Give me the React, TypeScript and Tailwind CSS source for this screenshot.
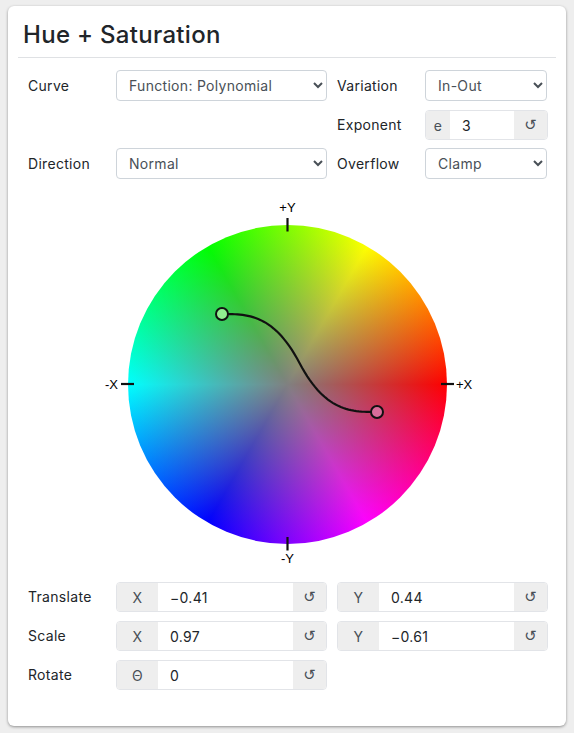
const curve = Array.from({ length: 61 }, (_, i) => {
  const t = i / 60;
  const f = t < 0.5 ? 4 * t * t * t : 1 - 4 * (1 - t) * (1 - t) * (1 - t);
  return `${i === 0 ? "M" : "L"}${(94 + 155 * t).toFixed(2)} ${(120 + 98 * f).toFixed(2)}`;
}).join(" ");

function Addon({ children, className }: { children: React.ReactNode; className: string }) {
  return (
    <span className={`flex items-center justify-center bg-[#eeeeee] text-[#495057] ${className}`}>{children}</span>
  );
}

function Reset() {
  return (
    <Addon className="w-[33px] shrink-0 text-[15px] tracking-normal [font-family:'DejaVu_Sans',sans-serif]">↺</Addon>
  );
}

function NumberInput({ addon, value, addonW = "w-[41px]", padding = "pl-3" }: { addon: string; value: string; addonW?: string; padding?: string }) {
  return (
    <div className="flex h-[30px] overflow-hidden rounded border border-[#e2e4e8]">
      <Addon className={`${addonW} shrink-0`}>{addon}</Addon>
      <div className={`flex min-w-0 flex-1 items-center text-[#212529] ${padding}`}>{value}</div>
      <Reset />
    </div>
  );
}

function Select({ value, options, className = "w-full" }: { value: string; options: string[]; className?: string }) {
  return (
    <select
      defaultValue={value}
      className={`h-[31px] rounded border border-[#ced4da] bg-white pl-2 text-[#495057] ${className}`}
    >
      {options.map((o) => (
        <option key={o}>{o}</option>
      ))}
    </select>
  );
}

function Label({ children }: { children: React.ReactNode }) {
  return <div className="flex items-center pb-px text-[#212529]">{children}</div>;
}

export default function App() {
  return (
    <div className="h-[733px] bg-[#eeeeee] px-2 pt-[6px] text-[14px] tracking-[0.3px] [font-family:'Inter','Open_Sans',sans-serif]">
      <div className="h-[720px] rounded-md bg-white px-[10px] shadow-[0_1px_3px_rgba(0,0,0,0.4)]">
        <h1 className="h-[52px] border-b border-[#dfe1e4] pl-[5px] pt-[11px] text-[24px] font-medium leading-[36px] tracking-[0.3px] text-[#212529]">
          Hue + Saturation
        </h1>
        <div className="mt-3 grid grid-cols-[88px_211px_98px_123px] grid-rows-[31px_29px_31px] gap-y-[9px] pl-[10px]">
          <Label>Curve</Label>
          <Select value="Function: Polynomial" options={["Function: Polynomial", "Function: Sine", "Linear"]} />
          <Label><span className="ml-[10px]">Variation</span></Label>
          <Select value="In-Out" options={["In", "Out", "In-Out"]} className="w-[122px]" />
          <div className="col-start-3 flex items-center pb-px pl-[10px] text-[#212529]">Exponent</div>
          <NumberInput addon="e" value="3" addonW="w-[24px]" padding="pl-3" />
          <Label>Direction</Label>
          <Select value="Normal" options={["Normal", "Reverse"]} />
          <Label><span className="ml-[10px]">Overflow</span></Label>
          <Select value="Clamp" options={["Clamp", "Wrap"]} className="w-[122px]" />
        </div>
        <div className="relative mb-[8px] mt-[15px] flex h-[380px] items-center justify-center pl-px">
          <div className="relative h-[319px] w-[319px] rounded-full bg-[conic-gradient(from_90deg,#ff0000,#ff00ff_60deg,#0000ff_120deg,#00ffff_180deg,#00ff00_240deg,#ffff00_300deg,#ff0000)]">
            <div className="h-full w-full rounded-full bg-[radial-gradient(closest-side,#808080,rgba(128,128,128,0))]" />
          </div>
          <svg className="absolute left-[110px] top-0 h-[380px] w-[340px] overflow-visible font-['Liberation_Sans',sans-serif] text-[13px] tracking-normal" viewBox="0 0 340 380">
            <g stroke="#111" strokeWidth="2.2">
              <line x1="159.5" y1="24" x2="159.5" y2="37.5" />
              <line x1="159.5" y1="343" x2="159.5" y2="356.5" />
              <line x1="-7" y1="190" x2="6" y2="190" />
              <line x1="313" y1="190" x2="326" y2="190" />
            </g>
            <text x="159.5" y="17.5" textAnchor="middle" fill="#000">+Y</text>
            <text x="159.5" y="369" textAnchor="middle" fill="#000">-Y</text>
            <text x="-10" y="194.5" textAnchor="end" fill="#000">-X</text>
            <text x="328" y="194.5" fill="#000">+X</text>
            <path d={curve} fill="none" stroke="#111" strokeWidth="2.2" />
            <circle cx="94" cy="120" r="6" fill="#90ee90" stroke="#111" strokeWidth="2" />
            <circle cx="249" cy="218" r="6" fill="#d96c9a" stroke="#111" strokeWidth="2" />
          </svg>
        </div>
        <div className="grid grid-cols-[88px_211px_221px] grid-rows-[30px_30px_30px] gap-y-[9px] pl-[10px]">
          <Label>Translate</Label>
          <NumberInput addon="X" value="−0.41" />
          <div className="ml-[10px]"><NumberInput addon="Y" value="0.44" /></div>
          <Label>Scale</Label>
          <NumberInput addon="X" value="0.97" />
          <div className="ml-[10px]"><NumberInput addon="Y" value="−0.61" /></div>
          <Label>Rotate</Label>
          <NumberInput addon="Θ" value="0" />
        </div>
      </div>
    </div>
  );
}
